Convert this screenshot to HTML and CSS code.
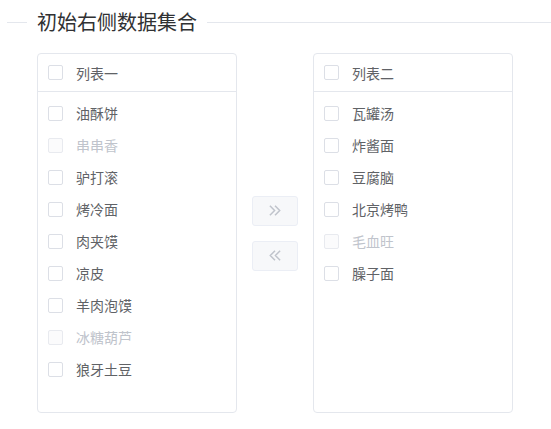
FILE: index.html
```html
<!DOCTYPE html>
<html lang="zh-CN">
<head>
<meta charset="utf-8">
<title>Transfer</title>
<link rel="stylesheet" href="styles.css">
</head>
<body>
<div class="page">
  <div class="title">
    <span class="line line-left"></span>
    <span class="title-text">初始右侧数据集合</span>
    <span class="line line-right"></span>
  </div>
  <div class="transfer">
    <div class="panel">
      <div class="panel-header"><span class="cb"></span><span class="label">列表一</span></div>
      <div class="panel-body">
        <div class="item"><span class="cb"></span><span class="label">油酥饼</span></div>
        <div class="item disabled"><span class="cb"></span><span class="label">串串香</span></div>
        <div class="item"><span class="cb"></span><span class="label">驴打滚</span></div>
        <div class="item"><span class="cb"></span><span class="label">烤冷面</span></div>
        <div class="item"><span class="cb"></span><span class="label">肉夹馍</span></div>
        <div class="item"><span class="cb"></span><span class="label">凉皮</span></div>
        <div class="item"><span class="cb"></span><span class="label">羊肉泡馍</span></div>
        <div class="item disabled"><span class="cb"></span><span class="label">冰糖葫芦</span></div>
        <div class="item"><span class="cb"></span><span class="label">狼牙土豆</span></div>
      </div>
    </div>
    <div class="buttons">
      <div class="btn"><svg width="12" height="11" viewBox="0 0 12 11"><path d="M0.9 0.7 L5.6 5.5 L0.9 10.3 M6 0.7 L10.7 5.5 L6 10.3" fill="none" stroke="#c0c4cc" stroke-width="1.5"/></svg></div>
      <div class="btn"><svg width="12" height="11" viewBox="0 0 12 11"><path d="M11.1 0.7 L6.4 5.5 L11.1 10.3 M6 0.7 L1.3 5.5 L6 10.3" fill="none" stroke="#c0c4cc" stroke-width="1.5"/></svg></div>
    </div>
    <div class="panel">
      <div class="panel-header"><span class="cb"></span><span class="label">列表二</span></div>
      <div class="panel-body">
        <div class="item"><span class="cb"></span><span class="label">瓦罐汤</span></div>
        <div class="item"><span class="cb"></span><span class="label">炸酱面</span></div>
        <div class="item"><span class="cb"></span><span class="label">豆腐脑</span></div>
        <div class="item"><span class="cb"></span><span class="label">北京烤鸭</span></div>
        <div class="item disabled"><span class="cb"></span><span class="label">毛血旺</span></div>
        <div class="item"><span class="cb"></span><span class="label">臊子面</span></div>
      </div>
    </div>
  </div>
</div>
</body>
</html>
```
FILE: styles.css
```css
html, body {
  margin: 0;
  padding: 0;
  background: #fff;
}
body {
  font-family: "Noto Sans CJK SC", "Noto Sans", sans-serif;
  color: #606266;
}
.page {
  padding-top: 10px;
}
.title {
  display: flex;
  align-items: center;
  height: 24px;
}
.line {
  height: 1px;
  background: #e4e7ed;
}
.line-left {
  width: 20px;
  margin-left: 7px;
}
.line-right {
  flex: 1;
}
.title-text {
  font-size: 20px;
  line-height: 24px;
  color: #303133;
  margin: 0 10px;
}
.transfer {
  display: flex;
  margin-top: 19px;
  padding-left: 37px;
}
.panel {
  width: 200px;
  height: 360px;
  box-sizing: border-box;
  border: 1px solid #e4e7ed;
  border-radius: 4px;
  background: #fff;
}
.panel-header {
  height: 38px;
  box-sizing: border-box;
  border-bottom: 1px solid #e4e7ed;
  display: flex;
  align-items: center;
  padding-left: 10px;
}
.panel-body {
  padding-top: 5px;
}
.item {
  height: 32px;
  display: flex;
  align-items: center;
  padding-left: 10px;
}
.cb {
  width: 15px;
  height: 15px;
  box-sizing: border-box;
  border: 1px solid #dcdfe6;
  border-radius: 2px;
  background: #fff;
  flex: none;
}
.label {
  font-size: 14px;
  line-height: 20px;
  margin-left: 13px;
  color: #606266;
}
.disabled .cb {
  border-color: #e8eaef;
  background: #fbfbfc;
}
.disabled .label {
  color: #c0c4cc;
}
.buttons {
  display: flex;
  flex-direction: column;
  justify-content: center;
  gap: 15px;
  margin: 0 15px;
}
.btn {
  width: 46px;
  height: 30px;
  box-sizing: border-box;
  border: 1px solid #ebeef5;
  border-radius: 3px;
  background: #f7f8fa;
  display: flex;
  align-items: center;
  justify-content: center;
}
```
